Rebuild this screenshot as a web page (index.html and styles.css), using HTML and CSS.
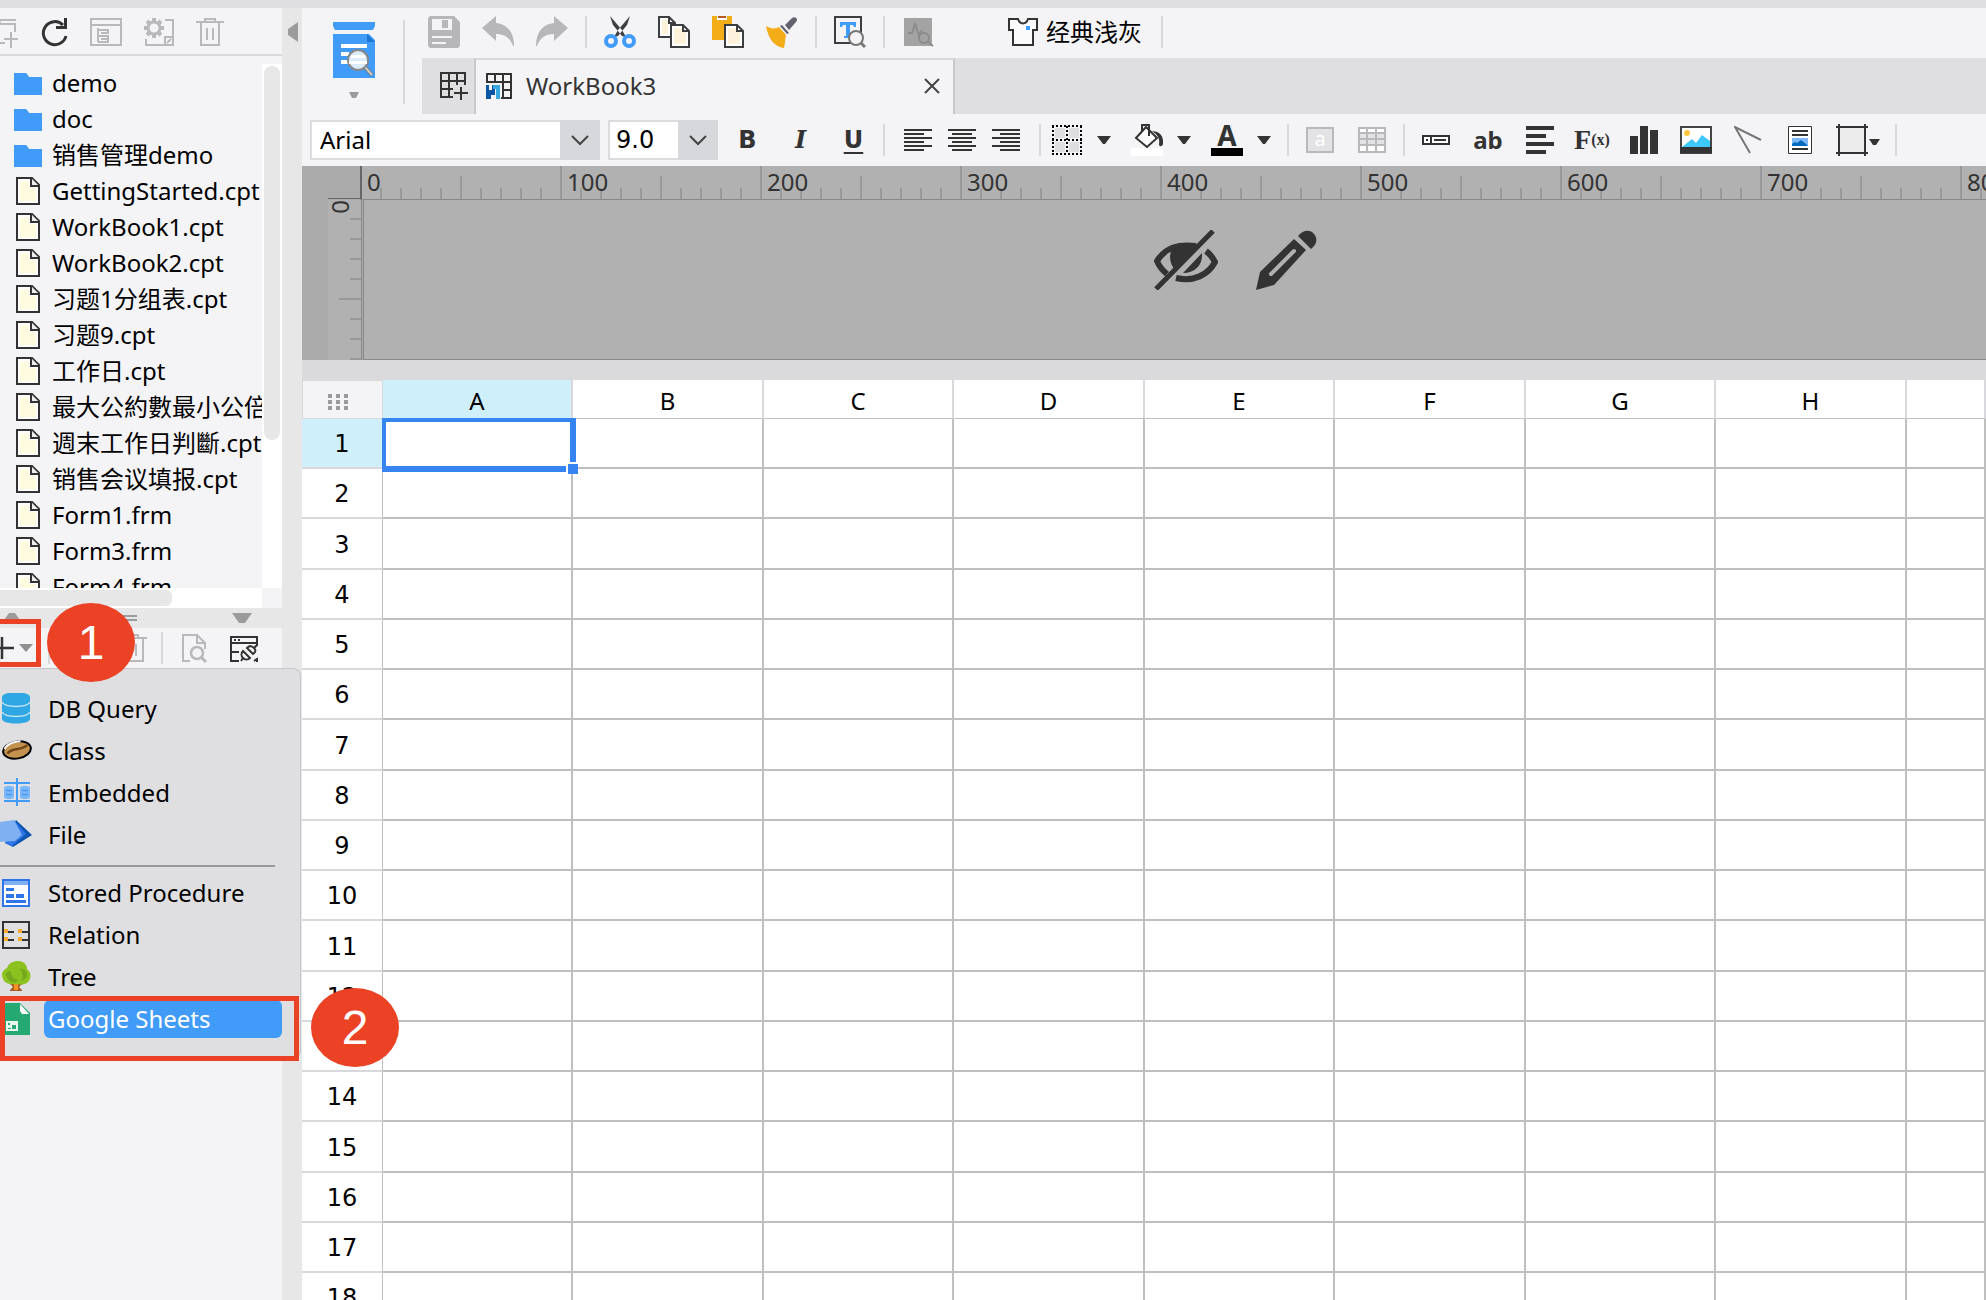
FILE: index.html
```
<!DOCTYPE html>
<html lang="en">
<head>
<meta charset="utf-8">
<title>WorkBook3</title>
<link rel="stylesheet" href="styles.css">
</head>
<body>
<div class="title-strip"></div>
<div class="app">
  <aside class="sidebar">
    <section class="pane files">
      <div class="side-tools">
        <button class="side-btn" aria-label="New folder"><svg width="32" height="32" viewBox="0 0 32 32" fill="none" stroke="#b9b9bb" stroke-width="2"><path d="M2 27V4h10l3 4h14v8M14 4h16M2 27h17M25 16v16M18 23h14"/></svg></button>
        <button class="side-btn" aria-label="Refresh"><svg width="32" height="32" viewBox="0 0 32 32" fill="none" stroke="#333" stroke-width="3"><path d="M28 20a11.500 11.500 0 1 1-3-11"/><path d="M27.500 2v9.500H18"/></svg></button>
        <button class="side-btn" aria-label="Template properties"><svg width="32" height="32" viewBox="0 0 32 32" fill="none" stroke="#b9b9bb" stroke-width="2"><path d="M1 3h30v26H1zM1 9h30M8 12v14M8 14h10M8 20h10M8 26h10M11 17h7M11 23h7M18 13v5M18 19v8"/></svg></button>
        <button class="side-btn" aria-label="Settings"><svg width="32" height="32" viewBox="0 0 32 32" fill="none" stroke="#b9b9bb" stroke-width="2"><circle cx="12" cy="12" r="6" stroke-width="3"/><path stroke-width="4" d="M12 2v4M12 18v4M2 12h4M18 12h4M5 5l3 3M19 5l-3 3M5 19l3-3M19 19l-3-3"/><path d="M23 4h8v25H4v-6M23 21h8v8h-8zM25 27l4-4"/></svg></button>
        <button class="side-btn" aria-label="Delete"><svg width="32" height="32" viewBox="0 0 32 32" fill="none" stroke="#b9b9bb" stroke-width="2"><path d="M2 6h28M11 6V3h10v3M7 6v23h18V6M13 12v12M19 12v12"/></svg></button>
      </div>
      <div class="tree-area">
        <ul class="tree">
          <li><svg class="folder" width="28" height="24" viewBox="0 0 28 24"><path fill="#419bf9" d="M0 2h12l3 3h13V0H14v0h14v24H0z"/><path fill="#f4f4f7" d="M13 2l2 4h13V4H16l-2-2z"/></svg>demo</li>
          <li><svg class="folder" width="28" height="24" viewBox="0 0 28 24"><path fill="#419bf9" d="M0 2h12l3 3h13V0H14v0h14v24H0z"/><path fill="#f4f4f7" d="M13 2l2 4h13V4H16l-2-2z"/></svg>doc</li>
          <li><svg class="folder" width="28" height="24" viewBox="0 0 28 24"><path fill="#419bf9" d="M0 2h12l3 3h13V0H14v0h14v24H0z"/><path fill="#f4f4f7" d="M13 2l2 4h13V4H16l-2-2z"/></svg>销售管理demo</li>
          <li><svg class="doc" width="28" height="28" viewBox="0 0 28 28"><use href="#doc"/></svg>GettingStarted.cpt</li>
          <li><svg class="doc" width="28" height="28" viewBox="0 0 28 28"><use href="#doc"/></svg>WorkBook1.cpt</li>
          <li><svg class="doc" width="28" height="28" viewBox="0 0 28 28"><use href="#doc"/></svg>WorkBook2.cpt</li>
          <li><svg class="doc" width="28" height="28" viewBox="0 0 28 28"><use href="#doc"/></svg>习题1分组表.cpt</li>
          <li><svg class="doc" width="28" height="28" viewBox="0 0 28 28"><use href="#doc"/></svg>习题9.cpt</li>
          <li><svg class="doc" width="28" height="28" viewBox="0 0 28 28"><use href="#doc"/></svg>工作日.cpt</li>
          <li><svg class="doc" width="28" height="28" viewBox="0 0 28 28"><use href="#doc"/></svg>最大公約數最小公倍</li>
          <li><svg class="doc" width="28" height="28" viewBox="0 0 28 28"><use href="#doc"/></svg>週末工作日判斷.cpt</li>
          <li><svg class="doc" width="28" height="28" viewBox="0 0 28 28"><use href="#doc"/></svg>销售会议填报.cpt</li>
          <li><svg class="doc" width="28" height="28" viewBox="0 0 28 28"><use href="#doc"/></svg>Form1.frm</li>
          <li><svg class="doc" width="28" height="28" viewBox="0 0 28 28"><use href="#doc"/></svg>Form3.frm</li>
          <li><svg class="doc" width="28" height="28" viewBox="0 0 28 28"><use href="#doc"/></svg>Form4.frm</li>
        </ul>
        <div class="vscroll"><div class="vthumb"></div></div>
        <div class="hscroll"><div class="hthumb"></div></div>
      </div>
    </section>
    <div class="hsplit">
      <svg width="20" height="10" viewBox="0 0 20 10"><path fill="#9b9b9b" d="M0 10L7 0h6l7 10z"/></svg>
      <svg width="20" height="6" viewBox="0 0 20 6"><path fill="#9b9b9b" d="M0 0h20v2H0zM0 4h20v2H0z"/></svg>
      <svg width="20" height="10" viewBox="0 0 20 10"><path fill="#9b9b9b" d="M0 0h20l-7 10H7z"/></svg>
    </div>
    <section class="pane data">
      <div class="data-tools">
        <button class="add-btn" aria-label="Add dataset"><svg width="42" height="32" viewBox="0 0 42 32"><path d="M2 5v22M0 16h14" stroke="#333" stroke-width="2.500"/><path fill="#8f8f8f" d="M19 12h14l-7 8z"/></svg></button>
        <span class="bar"></span>
        <button class="data-btn trash" aria-label="Delete dataset"><svg width="28" height="32" viewBox="0 0 28 32" fill="none" stroke="#b9b9bb" stroke-width="2"><path d="M0 6h28M9 6V3h10v3M4 6v23h20V6M11 12v12M17 12v12"/></svg></button>
        <span class="bar"></span>
        <button class="data-btn" aria-label="Preview"><svg width="28" height="32" viewBox="0 0 28 32" fill="none" stroke="#b9b9bb" stroke-width="2"><path d="M10 29H3V3h14l8 8v6M17 3v8h8"/><circle cx="17" cy="21" r="6" stroke-width="2.500"/><path stroke-width="3" d="M21 25l5 5"/></svg></button>
        <button class="data-btn" aria-label="Connection"><svg width="30" height="32" viewBox="0 0 30 32" fill="none" stroke="#333" stroke-width="2"><path d="M10 29H2V5h26v9M2 11h26M2 20h8M5 8h2M9 8h2"/><path d="M14 19l7 7c-2 2-5 2-7 0s-2-5 0-7zM18 16l6 6c3-2 3-4 1-6s-4-3-7 0zM12 29l2-3M25 16l3-3M25 29l3-2v3"/></svg></button>
      </div>
    </section>
  </aside>

  <div class="vsplit"><svg width="10" height="20" viewBox="0 0 10 20"><path fill="#9b9b9b" d="M10 0v20L0 13V7z"/></svg></div>

  <main class="main">
    <header class="header">
      <button class="preview-btn" aria-label="Preview">
        <svg width="42" height="56" viewBox="0 0 42 56"><path fill="#419bf9" d="M0 0h42v4l-2 4H2L0 4zM0 12h36l6 6v38H0z"/><path fill="#1d76d2" d="M34 12v8h8z"/><path fill="#fff" d="M8 22h26v4H8zM8 30h8v4H8zM8 38h8v4H8z"/><path stroke="#777" stroke-width="4" d="M32 45l7 8"/><path stroke="#ccc" stroke-width="2" d="M32 45l7 8"/><circle cx="25" cy="38" r="10" fill="#dcecfd" stroke="#888" stroke-width="2"/><path fill="#fff" d="M18 33h14v3H18zM16 39h18v3H16z"/></svg>
        <svg width="10" height="6" viewBox="0 0 10 6"><path fill="#9b9b9b" d="M0 0h10L7 6H3z"/></svg>
      </button>
      <div class="top-tools">
        <button class="tool" aria-label="Save"><svg width="32" height="32" viewBox="0 0 32 32"><path fill="#b7b7b9" d="M0 2l2-2h24l6 6v24l-2 2H2l-2-2z"/><path fill="#f4f4f7" d="M4 3h20v11H4zM4 20h20v2H4zM4 26h14v2H4z"/><path fill="#b7b7b9" d="M14 4h6v8h-6z"/></svg></button>
        <button class="tool" aria-label="Undo"><svg width="32" height="32" viewBox="0 0 32 32"><path fill="#b7b7b9" d="M0 12L14 0v7c11 1 18 9 18 23h-1c-3-8-8-12-17-12v7z"/></svg></button>
        <button class="tool" aria-label="Redo"><svg width="32" height="32" viewBox="0 0 32 32"><path fill="#b7b7b9" d="M32 12L18 0v7C7 8 0 16 0 30h1c3-8 8-12 17-12v7z"/></svg></button>
        <span class="sep"></span>
        <button class="tool" aria-label="Cut"><svg width="32" height="32" viewBox="0 0 32 32"><path fill="#3c3e41" d="M6 0l12 14 4 7-4-1-9-11zM26 0L14 14l-4 7 4-1 9-11z"/><g fill="none" stroke="#419bf9" stroke-width="4"><circle cx="7" cy="25" r="5"/><circle cx="25" cy="25" r="5"/></g></svg></button>
        <button class="tool" aria-label="Copy"><svg width="32" height="32" viewBox="0 0 32 32" stroke="#3c3e41" stroke-width="2"><path fill="#fff" d="M1 1h10l6 6v14H1z"/><path fill="#fdf3dc" stroke="none" d="M4 4h6v14H4z"/><path fill="none" d="M11 1v6h6"/><path fill="#fff" d="M13 9h12l6 6v16H13z"/><path fill="#fdf3dc" stroke="none" d="M16 12h8v4h4v12H16z"/><path fill="none" d="M25 9v6h6"/></svg></button>
        <button class="tool" aria-label="Paste"><svg width="32" height="32" viewBox="0 0 32 32" stroke="#3c3e41" stroke-width="2"><path fill="#f2ad17" stroke="none" d="M0 0h20v24H0z"/><path fill="#fff" stroke="none" d="M5 0h10v4H5z"/><path fill="#bc5a1d" stroke="none" d="M6 0h8v2H6z"/><path fill="#fff" d="M13 9h12l6 6v16H13z"/><path fill="#fdf3dc" stroke="none" d="M16 12h8v4h4v12H16z"/><path fill="none" d="M25 9v6h6"/></svg></button>
        <button class="tool" aria-label="Format painter"><svg width="32" height="32" viewBox="0 0 32 32"><path fill="#f2ad17" d="M0 10c5 3 9 3 13 1l7 8c-1 5-1 9-2 13C8 31 2 22 0 10z"/><path fill="#62636c" d="M16 9l7 8-2 1-7-8zM19 9l7-7c3-2 7 1 4 4l-7 8z"/></svg></button>
        <span class="sep"></span>
        <button class="tool" aria-label="Find text"><svg width="32" height="32" viewBox="0 0 32 32"><path fill="none" stroke="#3c3e41" stroke-width="2" d="M1 1h26v26H1z"/><path fill="#419bf9" d="M6 6h16v5h-2l-1-2h-3v11h2v2h-8v-2h2V9H9l-1 2H6z"/><circle cx="22" cy="22" r="7" fill="#f4f4f7" stroke="#777" stroke-width="2"/><path stroke="#777" stroke-width="3" d="M27 27l4 4"/></svg></button>
        <span class="sep"></span>
        <button class="tool" aria-label="Performance"><svg width="32" height="32" viewBox="0 0 32 32"><path fill="#a3a3a3" d="M2 2h28v28H2z"/><g fill="none" stroke="#8b8b8b" stroke-width="2"><path d="M6 17h4l3-9 4 11 3-5"/><circle cx="22" cy="22" r="5"/><path d="M26 26l5 4"/></g></svg></button>
        <button class="theme-btn"><svg width="32" height="32" viewBox="0 0 32 32"><path fill="#fbfbfc" stroke="#333" stroke-width="2" d="M2 3h9c2 6 8 6 10 0h9v11h-4v15H6V14H2z"/><path fill="#419bf9" d="M19 10h4v4h-4z"/></svg>经典浅灰</button>
        <span class="sep theme-sep"></span>
      </div>
      <nav class="tabs">
        <button class="new-tab" aria-label="New workbook"><svg width="28" height="28" viewBox="0 0 28 28" fill="none" stroke="#333" stroke-width="2"><path d="M25 13V1H1v24h12M1 9h24M1 17h12M9 1v24M17 1v12M21 15v13M14 21h14"/></svg></button>
        <a class="tab" href="#"><svg width="26" height="26" viewBox="0 0 26 26"><path fill="none" stroke="#333" stroke-width="2" d="M1 11V1h24v24H15M1 9h24M9 1v8M17 1v24M17 17h8"/><path fill="#f4f4f7" d="M0 10h15v16H0z"/><path fill="#0a56a4" d="M0 12h3v5h3v-5h3v10H5v4H0z"/><path fill="#36a9e1" d="M7 12h7v14h-4V16H7z"/></svg><span>WorkBook3</span><svg class="close" width="16" height="16" viewBox="0 0 16 16"><path stroke="#444" stroke-width="2" d="M1 1l14 14M15 1L1 15"/></svg></a>
      </nav>
    </header>

    <div class="format">
      <div class="combo font"><select aria-label="Font"><option>Arial</option></select><svg width="40" height="40" viewBox="0 0 40 40"><path fill="none" stroke="#444" stroke-width="2" d="M12 16l8 8 8-8"/></svg></div>
      <div class="combo size"><select aria-label="Font size"><option>9.0</option></select><svg width="40" height="40" viewBox="0 0 40 40"><path fill="none" stroke="#444" stroke-width="2" d="M12 16l8 8 8-8"/></svg></div>
      <div class="group styles">
        <button class="letter bold">B</button><button class="letter italic">I</button><button class="letter under">U</button>
      </div>
      <span class="bar after-styles"></span>
      <div class="group aligns">
        <button aria-label="Align left"><svg width="28" height="24" viewBox="0 0 28 24"><path fill="#333" d="M0 1h28v2H0zM0 5h20v2H0zM0 9h28v2H0zM0 13h20v2H0zM0 17h28v2H0zM0 21h20v2H0z"/></svg></button>
        <button aria-label="Align center"><svg width="28" height="24" viewBox="0 0 28 24"><path fill="#333" d="M0 1h28v2H0zM4 5h20v2H4zM0 9h28v2H0zM4 13h20v2H4zM0 17h28v2H0zM4 21h20v2H4z"/></svg></button>
        <button aria-label="Align right"><svg width="28" height="24" viewBox="0 0 28 24"><path fill="#333" d="M0 1h28v2H0zM8 5h20v2H8zM0 9h28v2H0zM8 13h20v2H8zM0 17h28v2H0zM8 21h20v2H8z"/></svg></button>
      </div>
      <span class="bar after-aligns"></span>
      <div class="group splits">
        <button aria-label="Borders"><svg width="32" height="32" viewBox="0 0 32 32"><path fill="#dedee0" d="M4 4h10v10H4zM18 4h10v10H18zM4 18h10v10H4zM18 18h10v10H18z"/><path fill="none" stroke="#000" stroke-width="2" stroke-dasharray="2 2" d="M1 2h30M1 16h30M1 30h30M2 2v28M16 2v28M30 2v28"/></svg><svg width="14" height="8" viewBox="0 0 14 8"><path fill="#333" d="M0 0h14L8 8H6z"/></svg></button>
        <button aria-label="Fill color"><svg width="32" height="32" viewBox="0 0 32 32"><path fill="#fff" d="M0 24h32v8H0z"/><path fill="#fff" stroke="#333" stroke-width="2" d="M15 3l11 11-10 9L5 14z"/><path fill="none" stroke="#333" stroke-width="2" d="M11 8V1h7v11"/><path fill="#333" d="M21 7c8 0 12 6 11 13-1 3-4 3-4 0 1-5-1-9-7-13z"/></svg><svg width="14" height="8" viewBox="0 0 14 8"><path fill="#333" d="M0 0h14L8 8H6z"/></svg></button>
        <button aria-label="Font color"><span class="color-a">A</span><svg width="14" height="8" viewBox="0 0 14 8"><path fill="#333" d="M0 0h14L8 8H6z"/></svg></button>
      </div>
      <span class="bar after-splits"></span>
      <div class="group cells">
        <button class="merge" aria-label="Merge cells"><span>a</span></button>
        <button aria-label="Unmerge cells"><svg width="28" height="28" viewBox="0 0 28 28"><path fill="#fff" d="M1 2h26v24H1z"/><path fill="#e3e3e5" d="M1 8h26v12H1z"/><path fill="none" stroke="#b9b9bb" stroke-width="2" d="M1 2h26v24H1zM1 7h26M1 13h26M1 19h26M9 2v24M18 2v24"/></svg></button>
      </div>
      <span class="bar wide"></span>
      <div class="group cells">
        <button aria-label="Widget"><svg width="28" height="12" viewBox="0 0 28 12"><path fill="#fff" stroke="#333" stroke-width="2" d="M1 2h26v8H1zM9 2v8M12 6h12M4 6h2"/></svg></button>
        <button class="ab">ab</button>
        <button aria-label="Rich text"><svg width="28" height="28" viewBox="0 0 28 28"><path fill="#333" d="M0 0h28v4H0zM0 8h20v4H0zM0 16h28v4H0zM0 24h20v4H0z"/></svg></button>
        <button class="fx"><b>F</b><span>(x)</span></button>
        <button aria-label="Chart"><svg width="28" height="28" viewBox="0 0 28 28"><path fill="#333" d="M0 10h8v18H0zM10 0h8v28h-8zM20 4h8v24h-8z"/></svg></button>
        <button aria-label="Image"><svg width="32" height="30" viewBox="0 0 32 30"><path fill="#fff" stroke="#444" stroke-width="2" d="M1 2h30v26H1z"/><circle cx="7" cy="8" r="3" fill="#ffc53d"/><path fill="#3fc8fb" d="M2 22l10-8 4 4 6-8 8 6v7H2z"/><path fill="#333" d="M0 22h32v6H0z"/></svg></button>
        <button aria-label="Slope line"><svg width="28" height="28" viewBox="0 0 28 28"><path fill="none" stroke="#777" stroke-width="2" d="M27 14L1 1l15 26"/></svg></button>
        <button aria-label="Sub report"><svg width="24" height="28" viewBox="0 0 24 28"><path fill="#fff" stroke="#333" d="M.5.5h23v27H.5z"/><path fill="#333" d="M4 4h16v2H4zM4 8h16v2H4zM4 22h16v2H4z"/><path fill="#7db8fd" d="M4 12h16v8H4z"/><path fill="#006bbd" d="M4 20v-2l3-2 2 1 4-3 5 4 2 2z"/></svg></button>
        <button class="shape" aria-label="Float shape"><svg width="44" height="32" viewBox="0 0 44 32"><path fill="#ececec" d="M3 3h26v26H3z"/><path fill="none" stroke="#333" stroke-width="2" d="M0 3h32M0 29h32M3 0v32M29 0v32"/><path fill="#333" d="M33 15h11l-4 6h-3z"/></svg></button>
      </div>
      <span class="bar last"></span>
    </div>

    <section class="canvas">
      <div class="corner"></div>
      <div class="ruler"><span class="origin">0</span><span>100</span><span>200</span><span>300</span><span>400</span><span>500</span><span>600</span><span>700</span><span>800</span></div>
      <div class="vruler"><span>0</span></div>
      <div class="stage">
        <button aria-label="Hide"><svg width="64" height="60" viewBox="0 0 64 60"><path fill="none" stroke="#333" stroke-width="6" d="M13 44C8 40 5 36 3 31 12 17 24 14 42 16M22 48c18 4 32-3 39-16-2-4-5-8-9-11"/><path fill="#333" d="M17 21c8-6 18-8 29-5L22 41c-6-6-7-13-5-20zM48 23c1 12-7 20-19 20z"/><path stroke="#333" stroke-width="5" d="M2 59L59 1"/></svg></button>
        <button aria-label="Edit"><svg width="62" height="60" viewBox="0 0 62 60"><path fill="#333" d="M0 60l4-18L38 9l12 11-32 35z"/><path fill="none" stroke="#b1b1b1" stroke-width="4" stroke-linecap="round" d="M15 44l23-23"/><path fill="#333" d="M42 6c5-6 12-7 16-2s3 10-3 15z"/></svg></button>
      </div>
    </section>

    <section class="sheet">
      <table>
        <colgroup><col class="c-head"><col class="c-b"><col class="c-a"><col class="c-b"><col class="c-a"><col class="c-b"><col class="c-a"><col class="c-b"><col class="c-a"><col></colgroup>
        <thead><tr><th class="all"><svg width="20" height="16" viewBox="0 0 20 16"><path fill="#9b9b9b" d="M0 0h4v4H0zM8 0h4v4H8zM16 0h4v4h-4zM0 6h4v4H0zM8 6h4v4H8zM16 6h4v4h-4zM0 12h4v4H0zM8 12h4v4H8zM16 12h4v4h-4z"/></svg></th><th class="on">A</th><th>B</th><th>C</th><th>D</th><th>E</th><th>F</th><th>G</th><th>H</th><th></th></tr></thead>
        <tbody>
          <tr><th class="on">1</th><td class="active"><div class="selection"></div><div class="handle"></div></td><td></td><td></td><td></td><td></td><td></td><td></td><td></td><td></td></tr>
          <tr><th>2</th><td></td><td></td><td></td><td></td><td></td><td></td><td></td><td></td><td></td></tr>
          <tr><th>3</th><td></td><td></td><td></td><td></td><td></td><td></td><td></td><td></td><td></td></tr>
          <tr><th>4</th><td></td><td></td><td></td><td></td><td></td><td></td><td></td><td></td><td></td></tr>
          <tr><th>5</th><td></td><td></td><td></td><td></td><td></td><td></td><td></td><td></td><td></td></tr>
          <tr><th>6</th><td></td><td></td><td></td><td></td><td></td><td></td><td></td><td></td><td></td></tr>
          <tr><th>7</th><td></td><td></td><td></td><td></td><td></td><td></td><td></td><td></td><td></td></tr>
          <tr><th>8</th><td></td><td></td><td></td><td></td><td></td><td></td><td></td><td></td><td></td></tr>
          <tr><th>9</th><td></td><td></td><td></td><td></td><td></td><td></td><td></td><td></td><td></td></tr>
          <tr><th>10</th><td></td><td></td><td></td><td></td><td></td><td></td><td></td><td></td><td></td></tr>
          <tr><th>11</th><td></td><td></td><td></td><td></td><td></td><td></td><td></td><td></td><td></td></tr>
          <tr><th>12</th><td></td><td></td><td></td><td></td><td></td><td></td><td></td><td></td><td></td></tr>
          <tr><th></th><td></td><td></td><td></td><td></td><td></td><td></td><td></td><td></td><td></td></tr>
          <tr><th>14</th><td></td><td></td><td></td><td></td><td></td><td></td><td></td><td></td><td></td></tr>
          <tr><th>15</th><td></td><td></td><td></td><td></td><td></td><td></td><td></td><td></td><td></td></tr>
          <tr><th>16</th><td></td><td></td><td></td><td></td><td></td><td></td><td></td><td></td><td></td></tr>
          <tr><th>17</th><td></td><td></td><td></td><td></td><td></td><td></td><td></td><td></td><td></td></tr>
          <tr><th>18</th><td></td><td></td><td></td><td></td><td></td><td></td><td></td><td></td><td></td></tr>
        </tbody>
      </table>
    </section>
  </main>
</div>

<div class="menu" role="menu">
  <button role="menuitem"><svg width="32" height="32" viewBox="0 0 32 32"><path fill="#2fa7e4" d="M2 4c0-6 28-6 28 0v22c0 6-28 6-28 0z"/><path fill="none" stroke="#c3e3f3" stroke-width="1.500" d="M2 9c3 6 25 6 28 0M2 19c3 6 25 6 28 0"/></svg><span>DB Query</span></button>
  <button role="menuitem"><svg width="32" height="32" viewBox="0 0 32 32"><g transform="rotate(-10 17 15)"><ellipse cx="17" cy="15" rx="14" ry="8.500" fill="#c2924e" stroke="#000" stroke-width="2"/><path fill="none" stroke="#fff" stroke-width="2" d="M5 12c3-5 12-6 17-5"/><path fill="none" stroke="#6f4516" stroke-width="2.500" d="M7 17c5-6 12 0 21-5"/></g></svg><span>Class</span></button>
  <button role="menuitem"><svg width="32" height="32" viewBox="0 0 32 32"><path stroke="#419bf9" stroke-width="2" d="M4 6h26M4 24h26M17 1v28"/><path fill="#7ab7fb" d="M4 11c0-3 10-3 10 0v9c0 3-10 3-10 0zM20 11c0-3 10-3 10 0v9c0 3-10 3-10 0z"/><path fill="none" stroke="#2f86ea" d="M6 13c2 1 4 1 6 0M6 17c2 1 4 1 6 0M22 13c2 1 4 1 6 0M22 17c2 1 4 1 6 0"/></svg><span>Embedded</span></button>
  <button role="menuitem"><svg width="32" height="32" viewBox="0 0 32 32"><path fill="#0c56b0" d="M16 1l16 15-19 12-8-4z"/><path fill="#2f75ea" d="M14 1l12 14-14 12-7-3z"/><path fill="#7fb1f2" d="M0 3l14-2 8 15-7 6-15 1z"/></svg><span>File</span></button>
  <hr>
  <button role="menuitem"><svg width="32" height="32" viewBox="0 0 32 32"><path fill="#fff" stroke="#2f75ea" stroke-width="2" d="M3 3h26v26H3z"/><path fill="#7fb1f2" d="M4 4h24v4H4z"/><path fill="#2f75ea" d="M6 11h8v3H6zM6 17h8v4H6zM16 17h8v4h-8zM6 23h20v3H6z"/></svg><span>Stored Procedure</span></button>
  <button role="menuitem"><svg width="32" height="32" viewBox="0 0 32 32"><path fill="none" stroke="#333" stroke-width="2" d="M3 3h26v26H3zM8 13h6M8 21h6M22 13h7M22 21h7"/><path fill="#ffab2e" d="M4 10h4v4H4zM4 18h4v4H4zM18 10h4v4h-4zM18 18h4v4h-4z"/></svg><span>Relation</span></button>
  <button role="menuitem"><svg width="32" height="32" viewBox="0 0 32 32"><path fill="#a85a24" d="M10 29l3-3-4-4h14l-4 4 3 3v1H10z"/><path fill="#f7931e" d="M14 23h4v6h-4z"/><path fill="#8cc220" d="M2 14c0-4 3-6 5-7 2-5 6-7 11-7 6 0 9 4 9 8 5 4 4 10 1 13-3 3-8 3-12 2-6 1-13 0-14-9z"/><path fill="#75a81d" d="M6 14c0-3 3-5 5-3 0 4 3 7 7 8-2 4-9 4-12-5zM19 7c4 4 5 9 2 13 6-2 8-7 4-11z"/></svg><span>Tree</span></button>
  <button role="menuitem" class="picked"><svg width="32" height="32" viewBox="0 0 32 32"><path fill="#23a971" d="M0 0h20l10 10v22H0z"/><path fill="#fff" d="M20 1l9 10h-7l-2-3z"/><path fill="#e9f6f0" d="M6 18h12v10H6z"/><path fill="#23a971" d="M8 20h2v2H8zM12 22h4v4h-4zM8 25h3v1H8z"/></svg><span>Google Sheets</span></button>
</div>

<div class="frame frame-add"></div>
<div class="frame frame-sheets"></div>
<div class="step step-one">1</div>
<div class="step step-two">2</div>

<svg class="defs" width="0" height="0" aria-hidden="true"><defs><g id="doc"><path fill="#fffbe0" stroke="#333" stroke-width="2" d="M3 1h15l7 7v19H3z"/><path fill="none" stroke="#fff" stroke-width="2" d="M5 25V3h11v7h7v15z"/><path fill="#eee" stroke="#333" stroke-width="2" d="M17 1v8h8"/></g></defs></svg>
</body>
</html>
```
FILE: styles.css
```
* { box-sizing: border-box; }
body {
  margin: 0;
  height: 100vh;
  overflow: hidden;
  position: relative;
  display: flex;
  flex-direction: column;
  background: #f4f4f7;
  color: #000;
  font: 24px/36px "Noto Sans", "Noto Sans CJK SC", sans-serif;
}
button {
  margin: 0;
  padding: 0;
  border: 0;
  background: none;
  color: inherit;
  font: inherit;
  display: flex;
  align-items: center;
  justify-content: center;
}
svg { display: block; flex: none; }
.defs { position: absolute; }
.title-strip { flex: none; height: 8px; background: #dfdfe1; }
.app { flex: 1; min-height: 0; display: flex; }

/* sidebar */
.sidebar {
  flex: none;
  width: 282px;
  display: grid;
  grid-template-rows: minmax(0, 600fr) 20px minmax(0, 672fr);
}
.pane { display: flex; flex-direction: column; min-height: 0; overflow: hidden; }
.side-tools {
  flex: none;
  height: 48px;
  padding-top: 2px;
  border-bottom: 2px solid #d9d9dc;
  display: flex;
  align-items: center;
  gap: 20px;
}
.side-btn:first-child { margin-left: -14px; }
.tree-area {
  flex: 1;
  min-height: 0;
  display: grid;
  grid-template: minmax(0, 1fr) 20px / minmax(0, 1fr) 20px;
}
.tree { list-style: none; margin: 0; padding: 9px 0 0; overflow: hidden; }
.tree li {
  height: 36px;
  padding-left: 14px;
  display: flex;
  align-items: center;
  gap: 10px;
  white-space: nowrap;
}
.vscroll { margin-top: 8px; padding: 2px; background: #fff; }
.vthumb { height: 72%; border-radius: 8px; background: #e7e7e7; }
.hscroll { padding: 2px 0; background: #fff; }
.hthumb { width: 172px; height: 16px; border-radius: 0 6px 6px 0; background: #e7e7e7; }
.hsplit {
  background: #e7e7e7;
  display: flex;
  align-items: center;
  justify-content: space-between;
  padding: 0 30px 0 2px;
}
.data-tools { height: 40px; display: flex; align-items: center; }
.add-btn { width: 48px; justify-content: flex-start; }
.bar { flex: none; width: 2px; height: 32px; background: #d9d9dc; }
.data-btn { margin-left: 17px; }
.data-btn:last-child { margin-left: 21px; }
.trash { margin: 0 14px 0 69px; }

.vsplit { flex: none; width: 20px; background: #e7e7e7; padding: 14px 0 0 6px; }

/* header */
.main { flex: 1; min-width: 0; display: flex; flex-direction: column; }
.header {
  flex: none;
  display: grid;
  grid-template: 50px 56px / 115px minmax(0, 1fr);
}
.preview-btn {
  grid-row: 1 / 3;
  flex-direction: column;
  justify-content: flex-start;
  gap: 14px;
  width: 103px;
  height: 84px;
  margin-top: 12px;
  padding: 2px 28px 0 30px;
  border-right: 2px solid #d9d9dc;
}
.top-tools { display: flex; align-items: center; padding-bottom: 2px; }
.tool { width: 54px; height: 48px; }
.sep { flex: none; width: 2px; height: 32px; margin: 0 6px; background: #d9d9dc; }
.theme-btn { margin-left: 62px; gap: 7px; }
.theme-sep { margin-left: 19px; }
.tabs { margin-left: 5px; background: #dfdfe1; display: flex; }
.new-tab { width: 54px; padding: 0 0 0 12px; border-right: 2px solid #c9c9cd; }
.tab {
  width: 479px;
  border-top: 2px solid #d9d9dc;
  border-right: 2px solid #c9c9cd;
  background: #f4f4f7;
  padding: 0 13px 2px 10px;
  display: flex;
  align-items: center;
  gap: 14px;
  color: #333;
  text-decoration: none;
}
.close { margin-left: auto; }

/* format bar */
.format { flex: none; height: 52px; padding-left: 8px; display: flex; align-items: center; }
.combo { display: grid; grid-template-columns: minmax(0, 1fr) 40px; height: 40px; }
.combo select {
  grid-area: 1 / 1 / 2 / 3;
  appearance: none;
  border: 2px solid #dcdce0;
  border-radius: 0;
  background: #fff;
  padding: 0 8px;
  font: inherit;
  color: #000;
}
.combo svg { grid-area: 1 / 2; z-index: 1; background: #d7d8dc; pointer-events: none; }
.font { width: 290px; }
.size { width: 110px; margin-left: 8px; }
.size select { padding: 0 6px; font-family: "DejaVu Sans", sans-serif; }
.group { display: flex; align-items: center; }
.styles { margin-left: 3px; }
.letter { width: 53px; height: 40px; color: #333; font: bold 24px/36px "DejaVu Sans", sans-serif; }
.italic { font-family: "DejaVu Serif", serif; font-style: italic; }
.under { text-decoration: underline; text-decoration-thickness: 2px; text-underline-offset: 4px; }
.after-styles { margin: 0 11px 0 3px; }
.aligns button { width: 44px; height: 40px; }
.after-aligns { margin: 0 10px 0 11px; }
.splits { gap: 20px; }
.splits button { width: 60px; justify-content: space-between; }
.color-a {
  width: 32px;
  height: 32px;
  border-bottom: 8px solid #000;
  color: #333;
  font: bold 28px/22px "Noto Sans", sans-serif;
}
.after-splits { margin: 0 5px 0 16px; }
.cells button { width: 52px; height: 40px; }
.merge span {
  width: 28px;
  height: 26px;
  border: 2px solid #b9b9bb;
  background: #e3e3e5;
  color: #fff;
  font-size: 20px;
  line-height: 20px;
}
.wide { margin: 0 5px; }
.ab { color: #333; font-weight: bold; }
.fx { color: #333; font: bold 16px/32px "Liberation Serif", serif; }
.fx b { font-size: 28px; }
.cells .shape { padding-left: 12px; }
.last { margin-left: 17px; }

/* canvas with rulers */
.canvas {
  flex: none;
  height: 194px;
  display: grid;
  grid-template: 34px minmax(0, 1fr) / 60px minmax(0, 1fr);
  background: #aaa;
  overflow: hidden;
}
.corner { border-bottom: 1px solid #666; background: #aaa; margin: 0 0 1px 26px; }
.ruler { display: flex; overflow: hidden; background: #b1b1b1; border-bottom: 1px solid #888; margin-left: -2px; }
.ruler span {
  flex: none;
  width: 200px;
  height: 33px;
  padding-left: 5px;
  color: #333;
  line-height: 32px;
  border-left: 2px solid #999;
  background:
    linear-gradient(#999, #999) 98px bottom / 2px 23px no-repeat,
    repeating-linear-gradient(to right, transparent 0 18px, #999 18px 20px) left bottom / 198px 11px no-repeat;
}
.ruler .origin { border-color: #666; }
.vruler {
  margin-left: 26px;
  border-right: 1px solid #888;
  background:
    linear-gradient(#999, #999) right 98px / 22px 2px no-repeat,
    repeating-linear-gradient(to bottom, transparent 0 18px, #999 18px 20px) right top / 11px 100% no-repeat,
    #b1b1b1;
}
.vruler span { display: block; width: 24px; writing-mode: vertical-rl; transform: rotate(180deg); line-height: 24px; color: #333; }
.stage {
  border: solid #888;
  border-width: 0 0 1px 1px;
  background: #b1b1b1;
  margin-left: 1px;
  padding-left: 122px;
  padding-bottom: 40px;
  display: flex;
  align-items: center;
  justify-content: center;
  gap: 38px;
}

/* spreadsheet */
.sheet { flex: 1; min-height: 0; overflow: hidden; border-top: 20px solid #dadadc; background: #fff; }
table { width: 100%; table-layout: fixed; border-collapse: separate; border-spacing: 0; }
.c-head { width: 81px; }
.c-a { width: 191px; }
.c-b { width: 190px; }
th, td { padding: 0; }
th { padding-top: 2px; font: 24px/36px "DejaVu Sans", sans-serif; }
thead th { height: 39px; padding-top: 4px; line-height: 34px; font-family: "Noto Sans", sans-serif; border-right: 2px solid #d9d9dd; border-bottom: 1px solid #bfbfbf; }
thead .all { border: 1px solid #d9d9dd; background: #f4f4f7; }
.all svg { margin-left: 25px; }
tbody tr { height: 50px; }
tbody tr:nth-child(4n+3) { height: 51px; }
tbody th { border-right: 1px solid #bfbfbf; border-bottom: 2px solid #d9d9dd; }
td { border-right: 2px solid #bfbfbf; border-bottom: 2px solid #bfbfbf; }
.on { background: #cfeffb; }
.active { position: relative; }
.selection { position: absolute; inset: -1px -5px -5px -1px; border: solid #3584ef; border-width: 4px 6px 6px 4px; }
.handle { position: absolute; right: -7px; bottom: -7px; width: 10px; height: 10px; background: #3584ef; box-shadow: -2px -2px 0 #fff; }

/* drop-down menu over the data pane */
.menu {
  position: absolute;
  left: 0;
  top: 668px;
  width: 301px;
  height: 391px;
  padding-top: 19px;
  border: solid #c5c5cb;
  border-width: 1px 1px 1px 0;
  border-radius: 0 8px 8px 0;
  background: #dfdfe1;
}
.menu button { width: 282px; height: 42px; justify-content: flex-start; gap: 12px; }
.menu span { flex: 1; height: 38px; padding-left: 4px; line-height: 38px; text-align: left; }
.menu hr { margin: 9px 25px 5px 0; border: 0; border-top: 2px solid #999; }
.picked span { border-radius: 6px; background: #419bf9; color: #fff; }

/* tutorial marks */
.frame { position: absolute; border: 5px solid #eb4125; }
.frame-add { left: -5px; top: 619px; width: 46px; height: 48px; }
.frame-sheets { left: 0; top: 996px; width: 299px; height: 65px; }
.step {
  position: absolute;
  width: 88px;
  height: 79px;
  border-radius: 50%;
  background: #eb4125;
  color: #fff;
  font: 48px/80px "Liberation Sans", sans-serif;
  text-align: center;
}
.step-one { left: 47px; top: 603px; }
.step-two { left: 311px; top: 988px; }
```
